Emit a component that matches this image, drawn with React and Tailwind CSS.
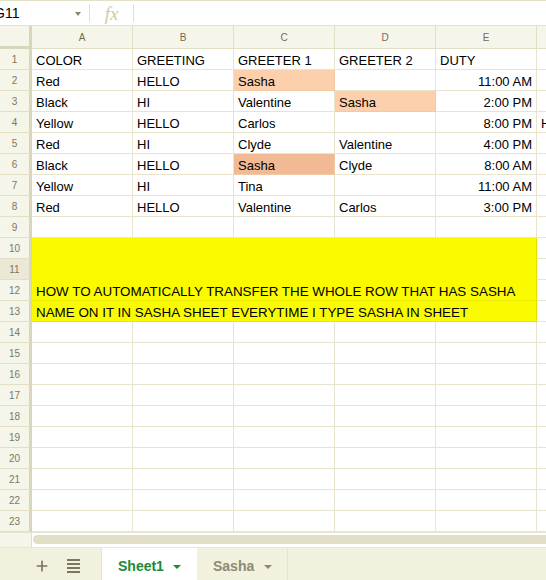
import { Plus } from 'lucide-react'

const COLS = ['A', 'B', 'C', 'D', 'E', 'F']

const ROWS = [
  ['COLOR', 'GREETING', 'GREETER 1', 'GREETER 2', 'DUTY', ''],
  ['Red', 'HELLO', 'Sasha', '', '11:00 AM', ''],
  ['Black', 'HI', 'Valentine', 'Sasha', '2:00 PM', ''],
  ['Yellow', 'HELLO', 'Carlos', '', '8:00 PM', 'H'],
  ['Red', 'HI', 'Clyde', 'Valentine', '4:00 PM', ''],
  ['Black', 'HELLO', 'Sasha', 'Clyde', '8:00 AM', ''],
  ['Yellow', 'HI', 'Tina', '', '11:00 AM', ''],
  ['Red', 'HELLO', 'Valentine', 'Carlos', '3:00 PM', ''],
]

// fill colours for highlighted cells, keyed "row-col"
const FILLS = {
  '1-2': 'bg-[#fcd0ad]',
  '2-3': 'bg-[#fcd0ad]',
  '5-2': 'bg-[#f1b994]',
}

const grid = 'grid grid-cols-[32px_101px_101px_101px_101px_101px_101px]'

function RowHead({ n, active }) {
  return (
    <div
      className={`h-[21px] border-b border-r-[3px] border-[#e2dfc4] border-r-[#d9d6bb] flex items-center justify-center text-[10px] text-[#7b785f] ${
        active ? 'bg-[#ebe9d6]' : 'bg-[#f6f5ea]'
      }`}
    >
      {n}
    </div>
  )
}

function DataRow({ cells, i }) {
  return (
    <div className={grid}>
      <RowHead n={i + 1} />
      {cells.map((c, j) => (
        <div
          key={j}
          className={`h-[21px] border-b border-r border-[#e8e5cc] flex items-end pb-[1px] px-[4px] whitespace-nowrap overflow-hidden text-[13px] leading-[15px] text-black ${
            j === 4 && i > 0 ? 'justify-end' : ''
          } ${FILLS[`${i}-${j}`] || 'bg-white'} ${FILLS[`${i}-${j}`] ? 'border-[#f0c9a6]' : ''}`}
        >
          {c}
        </div>
      ))}
    </div>
  )
}

function EmptyRow({ n }) {
  return (
    <div className={grid}>
      <RowHead n={n} />
      {COLS.map((c) => (
        <div key={c} className="h-[21px] border-b border-r border-[#e8e5cc] bg-white" />
      ))}
    </div>
  )
}

function YellowRow({ n, text, line, active }) {
  return (
    <div className={grid}>
      <RowHead n={n} active={active} />
      <div
        className={`col-span-5 h-[21px] bg-[#fbfb00] border-r border-r-[#e4e400] border-b flex items-end pb-[1px] px-[4px] whitespace-nowrap text-[13.4px] leading-[15px] text-black ${
          line ? 'border-b-[#e8e800]' : 'border-b-[#fbfb00]'
        }`}
      >
        {text}
      </div>
      <div className="h-[21px] border-b border-r border-[#e8e5cc] bg-white" />
    </div>
  )
}

export default function App() {
  return (
    <div className="w-[546px] h-[580px] overflow-hidden bg-white font-['Liberation_Sans',Arial,sans-serif] flex flex-col">
      {/* Formula bar */}
      <div className="h-[26px] flex items-center border-t border-b border-[#e4e1c8] bg-white shrink-0">
        <div className="w-[89px] h-full flex items-center overflow-hidden relative">
          <span className="ml-[-6px] text-[14px] text-black">G11</span>
          <span className="absolute left-[75px] top-[11px] w-0 h-0 border-l-[3.5px] border-r-[3.5px] border-t-[4px] border-l-transparent border-r-transparent border-t-[#8a876f]" />
        </div>
        <div className="w-px h-[18px] bg-[#e4e1c8]" />
        <div className="w-[43px] flex items-center justify-center">
          <span className="font-['Liberation_Serif',serif] italic text-[19px] text-[#cfcba8] leading-none">fx</span>
        </div>
        <div className="w-px h-[18px] bg-[#e4e1c8]" />
      </div>

      {/* Column headers */}
      <div className={`${grid} shrink-0`}>
        <div className="h-[23px] bg-[#f6f5ea] border-r-[3px] border-b-[3px] border-[#d9d6bb]" />
        {COLS.map((c) => (
          <div
            key={c}
            className="h-[23px] bg-[#f6f5ea] border-r border-b border-[#e2dfc4] flex items-center justify-center text-[10px] text-[#6f6c55]"
          >
            {c !== 'F' ? c : ''}
          </div>
        ))}
      </div>

      {/* Rows */}
      <div className="shrink-0">
        {ROWS.map((r, i) => (
          <DataRow key={i} cells={r} i={i} />
        ))}
        <EmptyRow n={9} />
        <YellowRow n={10} />
        <YellowRow n={11} active />
        <YellowRow n={12} text="HOW TO AUTOMATICALLY TRANSFER THE WHOLE ROW THAT HAS SASHA" line />
        <YellowRow n={13} text="NAME ON IT IN SASHA SHEET EVERYTIME I TYPE SASHA IN SHEET" line />
        {Array.from({ length: 10 }, (_, k) => (
          <EmptyRow key={k} n={14 + k} />
        ))}
      </div>

      {/* Horizontal scrollbar */}
      <div className="h-[15px] flex shrink-0 border-t border-[#e8e5cc]">
        <div className="w-[32px] bg-[#f6f5ea] border-r border-[#e2dfc4]" />
        <div className="flex-1 bg-white pt-[2px] pl-[1px]">
          <div className="h-[9px] bg-[#e1dfc6] rounded-l-full" />
        </div>
      </div>

      {/* Sheet tabs */}
      <div className="flex-1 flex items-stretch bg-[#f1f1de] border-t border-[#e8e6cf]">
        <div className="w-[101px] flex items-center pt-[4px] pl-[34px] gap-[17px] text-[#7a765f]">
          <Plus size={16} strokeWidth={2.5} />
          <div className="flex flex-col gap-[2px] w-[13px]">
            <div className="h-[2px] bg-[#7a765f]" />
            <div className="h-[2px] bg-[#7a765f]" />
            <div className="h-[2px] bg-[#7a765f]" />
            <div className="h-[2px] bg-[#7a765f]" />
          </div>
        </div>
        <div className="w-[96px] bg-white border-l border-[#e6e4cc] flex items-center pt-[5px] pl-[16px] gap-[9px]">
          <span className="text-[14px] font-bold text-[#1a8a38]">Sheet1</span>
          <span className="w-0 h-0 border-l-[4px] border-r-[4px] border-t-[4px] border-l-transparent border-r-transparent border-t-[#1a8a38]" />
        </div>
        <div className="w-[91px] border-r border-[#e6e4cc] flex items-center pt-[5px] pl-[16px] gap-[10px]">
          <span className="text-[14px] font-bold text-[#8d8a72]">Sasha</span>
          <span className="w-0 h-0 border-l-[4px] border-r-[4px] border-t-[4px] border-l-transparent border-r-transparent border-t-[#8d8a72]" />
        </div>
      </div>
    </div>
  )
}
